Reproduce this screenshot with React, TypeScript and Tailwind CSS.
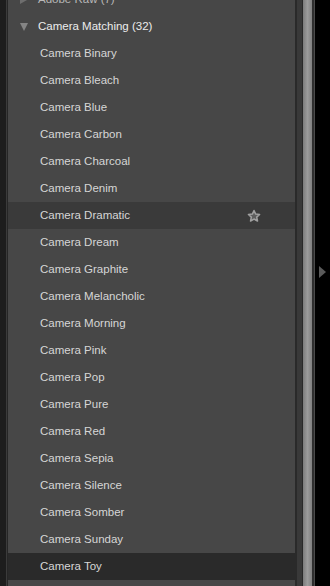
import React from "react";

const items = [
  "Camera Binary",
  "Camera Bleach",
  "Camera Blue",
  "Camera Carbon",
  "Camera Charcoal",
  "Camera Denim",
  "Camera Dramatic",
  "Camera Dream",
  "Camera Graphite",
  "Camera Melancholic",
  "Camera Morning",
  "Camera Pink",
  "Camera Pop",
  "Camera Pure",
  "Camera Red",
  "Camera Sepia",
  "Camera Silence",
  "Camera Somber",
  "Camera Sunday",
  "Camera Toy",
];

function Star() {
  return (
    <svg width="14" height="14" viewBox="0 0 24 24">
      <path
        d="M12 2.5l2.9 6.2 6.7.7-5 4.6 1.4 6.6L12 17.2l-5.9 3.4 1.4-6.6-5-4.6 6.7-.7z"
        fill="#5e5e5e"
        stroke="#a0a0a0"
        strokeWidth="2.6"
        strokeLinejoin="round"
      />
    </svg>
  );
}

export default function App() {
  return (
    <div
      className="w-[330px] h-[586px] flex overflow-hidden bg-black"
      style={{ fontFamily: '"Liberation Sans", Arial, sans-serif' }}
    >
      <div className="w-[6px] bg-[#1d1d1d]" />
      <div className="w-px bg-[#3b3b3b]" />
      <div className="w-px bg-[#262626]" />
      <div className="w-[287px] bg-[#474747] overflow-hidden">
        <div className="-mt-[14px] flex flex-col">
          <div className="h-[27px] flex items-center pl-[12px] text-[11.5px] text-[#b8b8b8]">
            <svg width="7" height="8" viewBox="0 0 7 8" className="mr-[11px]">
              <path d="M0 0L7 4L0 8Z" fill="#6e6e6e" />
            </svg>
            <span>Adobe Raw (7)</span>
          </div>
          <div className="h-[27px] flex items-center pl-[12px] text-[11.5px] text-[#ececec]">
            <svg width="8" height="8" viewBox="0 0 8 8" className="mr-[10px] mt-[1px]">
              <path d="M0 0H8L4 8Z" fill="#858585" />
            </svg>
            <span>Camera Matching (32)</span>
          </div>
          {items.map((name) => {
            const hover = name === "Camera Dramatic";
            const sel = name === "Camera Toy";
            return (
              <div
                key={name}
                className={
                  "h-[27px] flex items-center justify-between pl-[32px] pr-[34px] text-[11.5px] text-[#d6d6d6] " +
                  (hover ? "bg-[#3a3a3a]" : sel ? "bg-[#2a2a2a]" : "")
                }
              >
                <span>{name}</span>
                {hover && <Star />}
              </div>
            );
          })}
        </div>
      </div>
      <div className="w-[2px] bg-[#2a2a2a]" />
      <div className="w-[5px] bg-[#393939]" />
      <div className="w-px bg-[#2a2a2a]" />
      <div className="w-[9px] bg-gradient-to-r from-[#7c7c7c] via-[#9c9c9c] to-[#808080]" />
      <div className="w-[2px] bg-[#2e2e2e]" />
      <div className="w-px bg-[#4a4a4a]" />
      <div className="flex-1 bg-black pt-[266px] pl-[4px]">
        <svg width="7" height="12" viewBox="0 0 7 12">
          <path d="M0 0L7 6L0 12Z" fill="#5a5a5a" />
        </svg>
      </div>
    </div>
  );
}
